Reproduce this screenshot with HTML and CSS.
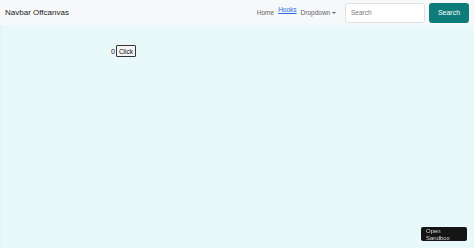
FILE: index.html
```html
<!DOCTYPE html>
<html>
<head>
<meta charset="utf-8">
<link rel="stylesheet" href="styles.css">
</head>
<body>
<nav class="navbar">
  <span class="brand">Navbar Offcanvas</span>
  <div class="nav-right">
    <ul class="nav-links">
      <li class="nav-item">Home</li>
      <li class="nav-item"><a class="hooks" href="#">Hooks</a></li>
      <li class="nav-item">Dropdown <span class="caret"></span></li>
    </ul>
    <form class="search-form">
      <input class="search-input" type="text" placeholder="Search">
      <button class="search-btn" type="button">Search</button>
    </form>
  </div>
</nav>
<main class="content">
  <div class="counter"><span class="count">0</span><button class="click-btn" type="button">Click</button></div>
</main>
<div class="sandbox">Open<br>Sandbox</div>
</body>
</html>
```
FILE: styles.css
```css
html, body {
  margin: 0;
  padding: 0;
  height: 100%;
}
body {
  font-family: "Liberation Sans", Arial, sans-serif;
  background: #e9f8f8;
  display: flex;
  flex-direction: column;
}
.navbar {
  height: 25px;
  background: #f6f8f9;
  display: flex;
  align-items: center;
  justify-content: space-between;
  padding: 0 5px;
  flex-shrink: 0;
}
.brand {
  font-size: 8px;
  color: #222;
}
.nav-right {
  display: flex;
  align-items: center;
}
.nav-links {
  list-style: none;
  margin: 0;
  padding: 0;
  display: flex;
  align-items: center;
  gap: 4px;
  margin-right: 9px;
}
.nav-item {
  font-size: 6.5px;
  color: #666;
}
.hooks {
  color: #2a6ee0;
  text-decoration: underline;
  position: relative;
  top: -3px;
}
.caret {
  display: inline-block;
  width: 0;
  height: 0;
  border-left: 2px solid transparent;
  border-right: 2px solid transparent;
  border-top: 2.5px solid #666;
  vertical-align: middle;
}
.search-form {
  display: flex;
  align-items: center;
  gap: 4px;
  margin: 0;
}
.search-input {
  width: 80px;
  height: 20px;
  box-sizing: border-box;
  border: 1px solid #dde2e5;
  border-radius: 3px;
  background: #fff;
  font-family: "Liberation Sans", Arial, sans-serif;
  font-size: 6.5px;
  padding: 0 5px;
  outline: none;
}
.search-input::placeholder {
  color: #777;
}
.search-btn {
  width: 40px;
  height: 20px;
  box-sizing: border-box;
  border: none;
  border-radius: 3px;
  background: #0e7c7b;
  color: #fff;
  font-family: "Liberation Sans", Arial, sans-serif;
  font-size: 7px;
  padding: 0;
}
.content {
  flex: 1;
  border-left: 2px solid #e4f6f6;
  padding-top: 20px;
  padding-left: 109px;
}
.counter {
  display: flex;
  align-items: center;
  font-size: 7px;
  color: #222;
}
.click-btn {
  font-family: "Liberation Sans", Arial, sans-serif;
  font-size: 6.5px;
  height: 12px;
  padding: 0 2px;
  border: 1px solid #333;
  background: #f4f4f4;
  color: #111;
  border-radius: 1px;
  margin-left: 1px;
}
.sandbox {
  position: fixed;
  right: 7px;
  bottom: 7px;
  width: 46px;
  height: 14px;
  box-sizing: border-box;
  background: #151515;
  border-radius: 2px;
  color: #ddd;
  font-size: 6px;
  line-height: 6.5px;
  padding: 1px 5px;
}
```
